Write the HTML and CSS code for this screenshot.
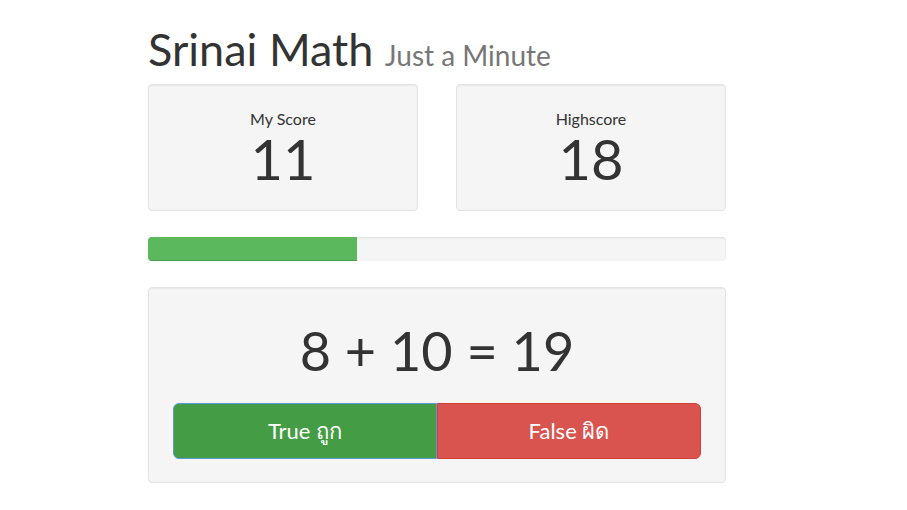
FILE: index.html
```html
<!DOCTYPE html>
<html>
<head>
<meta charset="utf-8">
<title>Srinai Math</title>
<link rel="stylesheet" href="styles.css">
</head>
<body>
<div class="container">
  <h1 class="title">Srinai Math <small>Just a Minute</small></h1>
  <div class="scores">
    <div class="well score-well">
      <div class="label">My Score</div>
      <div class="num">11</div>
    </div>
    <div class="well score-well">
      <div class="label">Highscore</div>
      <div class="num">18</div>
    </div>
  </div>
  <div class="progress"><div class="bar" style="width: 36.2%"></div></div>
  <div class="well question">
    <div class="equation">8 + 10 = 19</div>
    <div class="btn-group">
      <button class="btn btn-true">True ถูก</button>
      <button class="btn btn-false">False ผิด</button>
    </div>
  </div>
</div>
</body>
</html>
```

FILE: styles.css
```css
html, body {
  margin: 0;
  padding: 0;
  background: #fff;
}
body {
  font-family: Lato, "Noto Sans", "DejaVu Sans", sans-serif;
  color: #333;
}
.container {
  width: 578px;
  margin-left: 148px;
  padding-top: 25px;
}
.title {
  margin: 0 0 11px 0;
  font-size: 45px;
  font-weight: 400;
  line-height: 48px;
  color: #333;
}
.title small {
  font-size: 28px;
  line-height: 1;
  color: #777;
}
.well {
  background: #f5f5f5;
  border: 1px solid #e3e3e3;
  border-radius: 4px;
  box-shadow: inset 0 1px 1px rgba(0,0,0,0.05);
  box-sizing: border-box;
}
.scores {
  display: grid;
  grid-template-columns: 270px 270px;
  column-gap: 38px;
}
.score-well {
  height: 127px;
  padding-top: 24px;
  text-align: center;
}
.label {
  font-size: 16px;
  line-height: 19px;
}
.num {
  margin-top: 3px;
  font-size: 56px;
  line-height: 56px;
}
.progress {
  margin-top: 26px;
  height: 24px;
  background: #f5f5f5;
  border-radius: 4px;
  overflow: hidden;
  box-shadow: inset 0 1px 2px rgba(0,0,0,0.1);
}
.bar {
  height: 100%;
  background: #5cb85c;
  box-shadow: inset 0 -1px 0 rgba(0,0,0,0.15);
}
.question {
  margin-top: 26px;
  height: 196px;
  padding: 33px 24px 0 24px;
  text-align: center;
}
.equation {
  font-size: 54px;
  line-height: 60px;
}
.btn-group {
  display: flex;
  margin-top: 22px;
}
.btn {
  flex: 1;
  height: 56px;
  font-family: Lato, "Noto Sans", "DejaVu Sans", sans-serif;
  font-size: 22px;
  color: #fff;
  border: 1px solid transparent;
  padding: 0;
  cursor: pointer;
}
.btn-true {
  background: #449d44;
  border-color: #5b9bd5;
  border-radius: 6px 0 0 6px;
}
.btn-false {
  background: #d9534f;
  border-color: #d43f3a;
  border-radius: 0 6px 6px 0;
}
```
